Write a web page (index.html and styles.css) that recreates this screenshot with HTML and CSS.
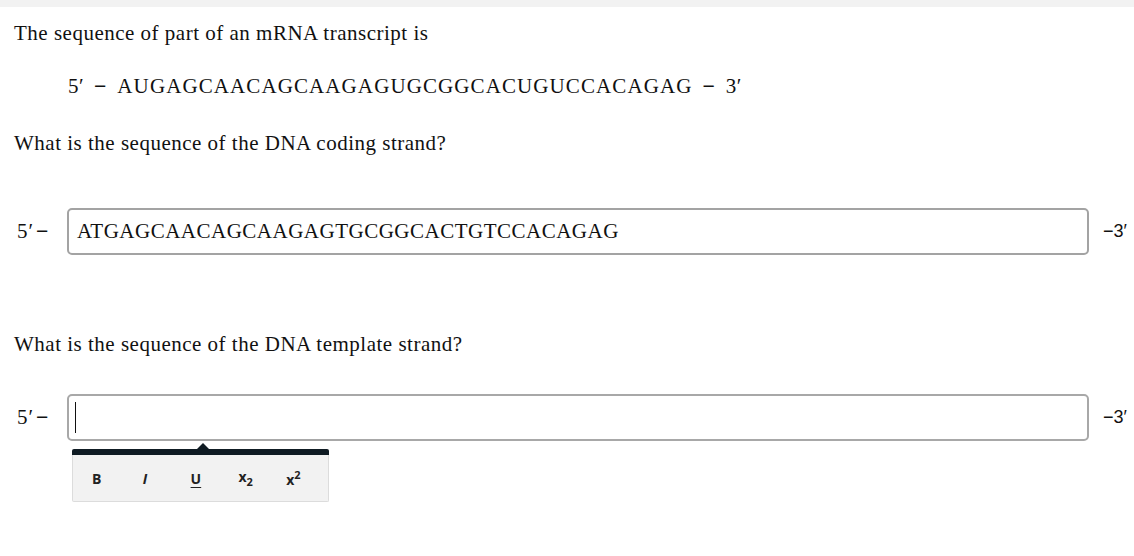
FILE: index.html
```html
<!DOCTYPE html>
<html>
<head>
<meta charset="utf-8">
<link rel="stylesheet" href="styles.css">
</head>
<body>
<div class="topbar"></div>
<div class="content">
  <p class="q q1">The sequence of part of an mRNA transcript is</p>
  <p class="seq"><span>5′</span><span class="op">−</span><span class="bases">AUGAGCAACAGCAAGAGUGCGGCACUGUCCACAGAG</span><span class="op">−</span><span>3′</span></p>
  <p class="q q2">What is the sequence of the DNA coding strand?</p>
  <div class="row row1">
    <span class="l5">5′<span class="m">−</span></span>
    <div class="box">ATGAGCAACAGCAAGAGTGCGGCACTGTCCACAGAG</div>
    <span class="r3">−3′</span>
  </div>
  <p class="q q3">What is the sequence of the DNA template strand?</p>
  <div class="row row2">
    <span class="l5">5′<span class="m">−</span></span>
    <div class="box active"><span class="caret"></span></div>
    <span class="r3">−3′</span>
  </div>
  <div class="toolbar">
    <div class="notch"></div>
    <div class="bar"></div>
    <div class="panel">
      <span class="btn b">B</span>
      <span class="btn i">I</span>
      <span class="btn u">U</span>
      <span class="btn">x<sub>2</sub></span>
      <span class="btn">x<sup>2</sup></span>
    </div>
  </div>
</div>
</body>
</html>
```
FILE: styles.css
```css
html, body {
  margin: 0;
  padding: 0;
  background: #fff;
}
body {
  font-family: "Liberation Serif", "Times New Roman", serif;
  font-size: 21px;
  letter-spacing: 0.5px;
  color: #111;
}
.topbar {
  height: 7px;
  background: #f2f2f2;
}
p {
  margin: 0;
  line-height: 22px;
}
.q {
  padding-left: 14px;
}
.q1 { margin-top: 15px; }
.seq { margin-top: 31px; padding-left: 68px; }
.seq .op {
  font-family: "Liberation Sans", Arial, sans-serif;
  margin: 0 11px 0 10px;
  letter-spacing: 0;
}
.seq .bases { letter-spacing: 1.1px; }
.q2 { margin-top: 35px; }
.q3 { margin-top: 78px; }
.row {
  display: flex;
  align-items: center;
  padding-left: 17px;
}
.row1 { margin-top: 54px; }
.row2 { margin-top: 39px; }
.l5 {
  width: 50px;
  font-size: 21px;
  letter-spacing: 1px;
}
.l5 .m {
  font-family: "Liberation Sans", Arial, sans-serif;
  letter-spacing: 0;
  margin-left: 2px;
}
.box {
  box-sizing: border-box;
  width: 1022px;
  height: 47px;
  border: 2px solid #a3a3a3;
  border-radius: 5px;
  padding-left: 8px;
  display: flex;
  align-items: center;
}
.box.active {
  border-color: #a8a8a8;
}
.caret {
  display: block;
  width: 1px;
  height: 31px;
  background: #111;
  margin-left: -2px;
}
.r3 {
  margin-left: 14px;
  font-family: "Liberation Sans", Arial, sans-serif;
  font-size: 18px;
  letter-spacing: 0;
}
.toolbar {
  margin-left: 72px;
  width: 257px;
  position: relative;
  padding-top: 6px;
  margin-top: 2px;
}
.notch {
  position: absolute;
  left: 124px;
  top: 0;
  width: 0;
  height: 0;
  border-left: 7px solid transparent;
  border-right: 7px solid transparent;
  border-bottom: 7px solid #0f1b23;
}
.bar {
  height: 6px;
  background: #0f1b23;
  border-radius: 2px 2px 0 0;
}
.panel {
  box-sizing: border-box;
  height: 47px;
  background: #f2f2f2;
  border: 1px solid #dcdcdc;
  border-top: none;
  border-radius: 0 0 2px 2px;
  display: flex;
  align-items: center;
  padding-left: 13px;
  font-family: "Open Sans", "Liberation Sans", Arial, sans-serif;
  font-weight: 700;
  font-size: 14px;
  letter-spacing: 0;
  color: #222;
}
.btn {
  width: 50px;
  text-align: left;
  padding-left: 6px;
}
.btn.i { font-style: italic; padding-left: 9px; }
.btn.u { text-decoration: underline; text-underline-offset: 3px; padding-left: 6px; }
sub, sup {
  font-size: 11px;
}
```
